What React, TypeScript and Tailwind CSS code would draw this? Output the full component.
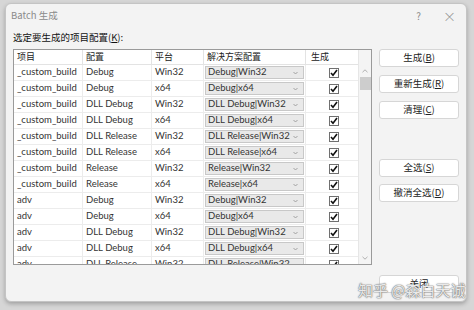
import React from "react";

const rows: [string, string, string, string][] = [
  ["_custom_build", "Debug", "Win32", "Debug|Win32"],
  ["_custom_build", "Debug", "x64", "Debug|x64"],
  ["_custom_build", "DLL Debug", "Win32", "DLL Debug|Win32"],
  ["_custom_build", "DLL Debug", "x64", "DLL Debug|x64"],
  ["_custom_build", "DLL Release", "Win32", "DLL Release|Win32"],
  ["_custom_build", "DLL Release", "x64", "DLL Release|x64"],
  ["_custom_build", "Release", "Win32", "Release|Win32"],
  ["_custom_build", "Release", "x64", "Release|x64"],
  ["adv", "Debug", "Win32", "Debug|Win32"],
  ["adv", "Debug", "x64", "Debug|x64"],
  ["adv", "DLL Debug", "Win32", "DLL Debug|Win32"],
  ["adv", "DLL Debug", "x64", "DLL Debug|x64"],
  ["adv", "DLL Release", "Win32", "DLL Release|Win32"],
];

const font = { fontFamily: '"Noto Sans CJK SC", "Noto Sans", sans-serif' };
const latin = { fontFamily: 'Lato, "Noto Sans CJK SC", sans-serif' };

function Check() {
  return (
    <div className="w-[10px] h-[10px] border border-[#707070] bg-white flex items-center justify-center">
      <svg width="8" height="8" viewBox="0 0 8 8">
        <path d="M1 4 L3 6.3 L7 1" stroke="#111" strokeWidth="1.6" fill="none" />
      </svg>
    </div>
  );
}

function Btn({ label, k }: { label: string; k: string }) {
  return (
    <div className="h-[18px] w-[80px] bg-white border border-[#d6d6d6] rounded-[3px] flex items-center justify-center text-[9.5px] text-[#222] leading-none">
      {label}(<span className="underline">{k}</span>)
    </div>
  );
}

export default function App() {
  return (
    <div className="w-[474px] h-[310px] bg-[#d6d6d6] overflow-hidden pt-[3px] pl-[5px]" style={font}>
      <div className="relative w-[462px] h-[299px] bg-[#f3f3f3] border border-[#c4c4c4] rounded-[6px] shadow-[0_2px_4px_rgba(0,0,0,0.25)] overflow-hidden">
        {/* title bar */}
        <div className="h-[22px] flex items-center pl-[5px] pr-[10px]">
          <span className="text-[9.5px] text-[#8a8a8a]">Batch 生成</span>
          <span className="ml-auto text-[10px] text-[#8a8a8a] mr-[22px]">?</span>
          <span className="text-[13px] text-[#8a8a8a] leading-none font-light">×</span>
        </div>
        <div className="flex pl-[7px]">
          <div className="flex flex-col">
            <div className="h-[23px] flex items-center text-[9.5px] text-[#111]">
              选定要生成的项目配置(<span className="underline">K</span>):
            </div>
            <div className="w-[359px] h-[216px] bg-white border border-[#9a9a9a] flex overflow-hidden">
              <div className="w-[344px] flex flex-col">
                <div className="h-[15px] flex text-[9px] text-[#222] border-b border-[#e3e3e3] shrink-0">
                  <div className="w-[69px] pl-[3px] border-r border-[#e3e3e3] flex items-center">项目</div>
                  <div className="w-[69px] pl-[3px] border-r border-[#e3e3e3] flex items-center">配置</div>
                  <div className="w-[52px] pl-[3px] border-r border-[#e3e3e3] flex items-center">平台</div>
                  <div className="w-[102px] pl-[3px] border-r border-[#e3e3e3] flex items-center">解决方案配置</div>
                  <div className="w-[52px] pl-[5px] flex items-center">生成</div>
                </div>
                {rows.map((r, i) => (
                  <div key={i} className="h-[16px] shrink-0 flex text-[9.5px] text-[#333] border-b border-[#ececec]" style={latin}>
                    <div className="w-[69px] pl-[3px] border-r border-[#ececec] flex items-center whitespace-nowrap overflow-hidden">{r[0]}</div>
                    <div className="w-[69px] pl-[3px] border-r border-[#ececec] flex items-center whitespace-nowrap overflow-hidden">{r[1]}</div>
                    <div className="w-[52px] pl-[3px] border-r border-[#ececec] flex items-center whitespace-nowrap overflow-hidden">{r[2]}</div>
                    <div className="w-[102px] px-[1px] py-[1px] border-r border-[#ececec] flex">
                      <div className="flex-1 bg-[#e9e9e9] border border-[#c8c8c8] flex items-center pl-[2px] pr-[5px] whitespace-nowrap overflow-hidden">
                        <span>{r[3]}</span>
                        <svg className="ml-auto shrink-0" width="5" height="4" viewBox="0 0 5 4">
                          <path d="M0.5 1 L2.5 3 L4.5 1" stroke="#999" strokeWidth="0.9" fill="none" />
                        </svg>
                      </div>
                    </div>
                    <div className="w-[52px] flex items-center pl-[23px]">
                      <Check />
                    </div>
                  </div>
                ))}
              </div>
              <div className="w-[13px] bg-[#f4f4f4] flex flex-col items-center border-l border-[#e6e6e6]">
                <div className="h-[15px]" />
                <div className="h-[12px] flex items-center justify-center">
                  <svg width="6" height="4" viewBox="0 0 6 4">
                    <path d="M0.5 3.2 L3 0.8 L5.5 3.2" stroke="#a8a8a8" strokeWidth="0.9" fill="none" />
                  </svg>
                </div>
                <div className="w-[11px] h-[13px] bg-[#cdcdcd]" />
                <div className="flex-1" />
                <div className="h-[12px] flex items-center justify-center">
                  <svg width="6" height="4" viewBox="0 0 6 4">
                    <path d="M0.5 0.8 L3 3.2 L5.5 0.8" stroke="#a8a8a8" strokeWidth="0.9" fill="none" />
                  </svg>
                </div>
              </div>
            </div>
          </div>
          <div className="flex flex-col ml-[7px] pt-[23px]">
            <div className="flex flex-col gap-[8px]">
              <Btn label="生成" k="B" />
              <Btn label="重新生成" k="R" />
              <Btn label="清理" k="C" />
            </div>
            <div className="flex flex-col gap-[7px] mt-[40px]">
              <Btn label="全选" k="S" />
              <Btn label="撤消全选" k="D" />
            </div>
            <div className="mt-[73px] h-[18px] w-[80px] bg-white border border-[#d6d6d6] rounded-[3px] flex items-center justify-center text-[9.5px] text-[#222] leading-none">
              关闭
            </div>
          </div>
        </div>
        {/* watermark */}
        <div
          className="absolute left-[352px] top-[278px] text-[15px] leading-none text-[rgba(255,255,255,0.85)] whitespace-nowrap"
          style={{ textShadow: "0 0 1px #777, 0 0 1px #777, 0 0 2px #999" }}
        >
          知乎 @森白天诚
        </div>
      </div>
    </div>
  );
}
